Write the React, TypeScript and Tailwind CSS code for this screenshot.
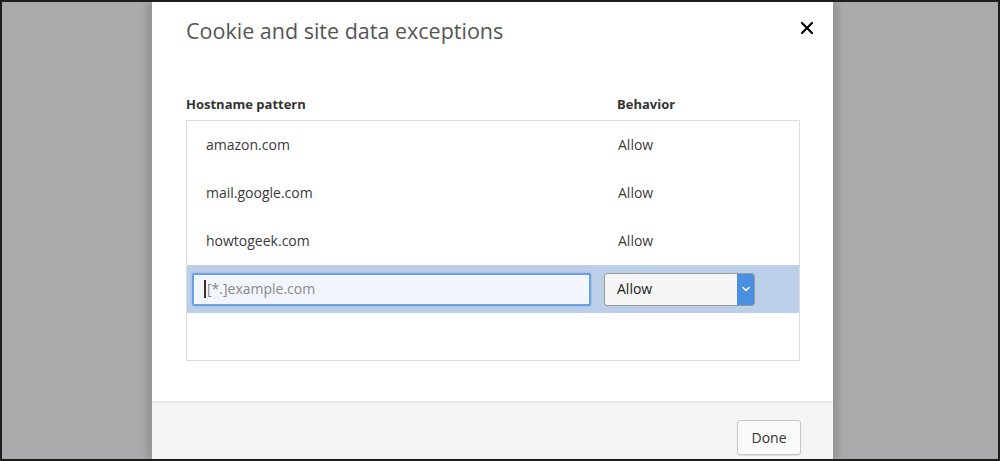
import { X, ChevronDown } from "lucide-react";

const rows = [
  { host: "amazon.com", behavior: "Allow" },
  { host: "mail.google.com", behavior: "Allow" },
  { host: "howtogeek.com", behavior: "Allow" },
];

export default function App() {
  return (
    <div
      className="h-[461px] w-[1000px] overflow-hidden border-2 border-[#1c1c1c] bg-[#a9aaab]"
      style={{ fontFamily: '"Open Sans", "Noto Sans", sans-serif' }}
    >
      <div className="flex h-full">
        {/* Dialog */}
        <div className="ml-[150px] flex h-full w-[681px] flex-col bg-white shadow-[-6px_0_6px_rgba(0,0,0,0.12),6px_0_6px_rgba(0,0,0,0.12)]">
          {/* Title */}
          <div className="flex items-start justify-between pl-[34px] pr-[16px] pt-[14px]">
            <h1 className="text-[21.5px] leading-[30px] text-[#555]">Cookie and site data exceptions</h1>
            <button className="mt-[2px] text-black">
              <X size={20} strokeWidth={2.6} />
            </button>
          </div>

          {/* Column headers */}
          <div className="mt-[49px] flex pl-[34px] text-[13px] font-bold leading-[18px] text-[#333]">
            <div className="w-[431px]">Hostname pattern</div>
            <div>Behavior</div>
          </div>

          {/* List */}
          <div className="ml-[34px] mt-[7px] h-[241px] w-[614px] border border-[#dcdcdc] text-[14px] text-[#3a3a3a]">
            {rows.map((r) => (
              <div key={r.host} className="flex h-[48px] items-center pb-[2px]">
                <div className="w-[431px] pl-[19px]">{r.host}</div>
                <div>{r.behavior}</div>
              </div>
            ))}

            {/* Editable row */}
            <div className="flex h-[48px] items-center bg-[#bccfe8]">
              <div className="ml-[5px] flex h-[33px] w-[399px] items-center rounded-[2px] border-2 border-[#6a9fe0] bg-[#f2f5fb] pb-[1px] pl-[10px] shadow-[0_0_2px_rgba(77,144,254,0.6)]">
                <span className="mr-[1px] h-[18px] w-[2px] bg-[#3a2a2a]" />
                <span className="text-[14px] text-[#8a8a8a]">[*.]example.com</span>
              </div>
              <div className="ml-[13px] flex h-[33px] w-[151px] overflow-hidden rounded-[3px] border border-[#9a9a9a] bg-[#f5f5f5]">
                <div className="flex flex-1 items-center pb-[1px] pl-[12px] text-[14px] text-[#222]">Allow</div>
                <div className="flex w-[17px] items-center justify-center bg-[#4a90e2] text-white">
                  <ChevronDown size={12} strokeWidth={3} />
                </div>
              </div>
            </div>
          </div>

          {/* Footer */}
          <div className="mt-auto flex h-[58px] items-start justify-end border-t-2 border-[#e6e6e6] bg-[#f5f5f5] pr-[32px] pt-[17px]">
            <button className="h-[35px] w-[64px] rounded-[3px] border border-[#c8c8c8] bg-[#fafafa] text-[14px] text-[#333] shadow-[0_1px_1px_rgba(0,0,0,0.08)]">
              Done
            </button>
          </div>
        </div>
      </div>
    </div>
  );
}
